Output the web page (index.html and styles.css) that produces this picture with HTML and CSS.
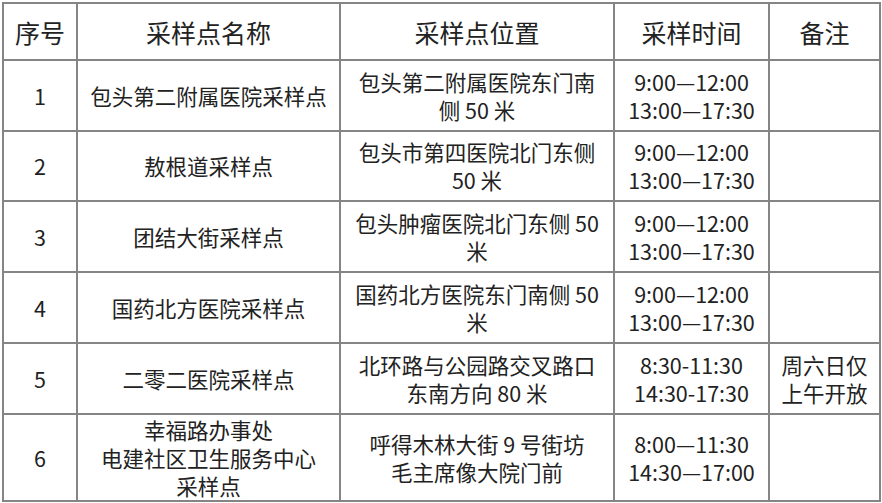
FILE: index.html
```html
<!DOCTYPE html>
<html lang="zh-CN">
<head>
<meta charset="utf-8">
<title>采样点</title>
<link rel="stylesheet" href="styles.css">
</head>
<body>
<table class="sheet">
  <colgroup>
    <col class="c-no">
    <col class="c-name">
    <col class="c-loc">
    <col class="c-time">
    <col class="c-note">
  </colgroup>
  <thead>
    <tr class="head">
      <th>序号</th>
      <th>采样点名称</th>
      <th>采样点位置</th>
      <th>采样时间</th>
      <th>备注</th>
    </tr>
  </thead>
  <tbody>
    <tr class="r71">
      <td>1</td>
      <td>包头第二附属医院采样点</td>
      <td>包头第二附属医院东门南<br>侧 50 米</td>
      <td>9:00—12:00<br>13:00—17:30</td>
      <td></td>
    </tr>
    <tr class="r70">
      <td>2</td>
      <td>敖根道采样点</td>
      <td>包头市第四医院北门东侧<br>50 米</td>
      <td>9:00—12:00<br>13:00—17:30</td>
      <td></td>
    </tr>
    <tr class="r71">
      <td>3</td>
      <td>团结大街采样点</td>
      <td>包头肿瘤医院北门东侧 50<br>米</td>
      <td>9:00—12:00<br>13:00—17:30</td>
      <td></td>
    </tr>
    <tr class="r71">
      <td>4</td>
      <td>国药北方医院采样点</td>
      <td>国药北方医院东门南侧 50<br>米</td>
      <td>9:00—12:00<br>13:00—17:30</td>
      <td></td>
    </tr>
    <tr class="r71">
      <td>5</td>
      <td>二零二医院采样点</td>
      <td>北环路与公园路交叉路口<br>东南方向 80 米</td>
      <td>8:30-11:30<br>14:30-17:30</td>
      <td>周六日仅<br>上午开放</td>
    </tr>
    <tr class="r85">
      <td>6</td>
      <td class="tall">幸福路办事处<br>电建社区卫生服务中心<br>采样点</td>
      <td>呼得木林大街 9 号街坊<br>毛主席像大院门前</td>
      <td>8:00—11:30<br>14:30—17:00</td>
      <td></td>
    </tr>
  </tbody>
</table>
</body>
</html>
```

FILE: styles.css
```css
html, body {
  margin: 0;
  padding: 0;
  background: #ffffff;
}

body {
  padding: 2px 0 0 2px;
  font-family: "Noto Sans CJK SC", "Noto Sans", sans-serif;
  color: #222222;
}

.sheet {
  border-collapse: collapse;
  table-layout: fixed;
  width: 879px;
}

.c-no { width: 74px; }
.c-name { width: 263px; }
.c-loc { width: 274px; }
.c-time { width: 155px; }
.c-note { width: 111px; }

.sheet th,
.sheet td {
  border: 2px solid #858585;
  padding: 0;
  text-align: center;
  vertical-align: middle;
  white-space: nowrap;
  overflow: hidden;
}

.sheet th {
  font-size: 25px;
  font-weight: 400;
  line-height: 30px;
}

.sheet td {
  font-size: 21.5px;
  line-height: 28px;
}

.sheet td.tall {
  line-height: 28px;
  padding-top: 1px;
}

.head { height: 57px; }
.r71 { height: 71px; }
.r70 { height: 70px; }
.r85 { height: 85px; }
```
